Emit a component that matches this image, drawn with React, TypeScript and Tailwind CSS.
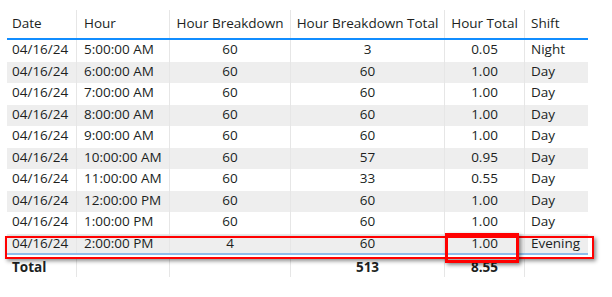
const COLS = 'grid grid-cols-[70px_93px_121px_154px_80px_63px]'

const ROWS = [
  ['5:00:00 AM', '60', '3', '0.05', 'Night'],
  ['6:00:00 AM', '60', '60', '1.00', 'Day'],
  ['7:00:00 AM', '60', '60', '1.00', 'Day'],
  ['8:00:00 AM', '60', '60', '1.00', 'Day'],
  ['9:00:00 AM', '60', '60', '1.00', 'Day'],
  ['10:00:00 AM', '60', '57', '0.95', 'Day'],
  ['11:00:00 AM', '60', '33', '0.55', 'Day'],
  ['12:00:00 PM', '60', '60', '1.00', 'Day'],
  ['1:00:00 PM', '60', '60', '1.00', 'Day'],
  ['2:00:00 PM', '4', '60', '1.00', 'Evening'],
]

const cell = 'border-r border-[#e6e6e6] whitespace-nowrap'

export default function App() {
  return (
    <div
      className="relative w-[612px] h-[297px] bg-white overflow-hidden pt-[10px] pl-[7px] text-[13.5px] text-[#201f1e]"
      style={{ fontFamily: '"Open Sans", "Noto Sans", sans-serif' }}
    >
      <div className="w-[581px]">
        {/* Header */}
        <div className={`${COLS} h-[30px] leading-[18px] border-b-2 border-[#118dff]`}>
          <div className={`${cell} pl-[5px] pt-[4px]`}>Date</div>
          <div className={`${cell} pl-[7px] pt-[4px]`}>Hour</div>
          <div className={`${cell} text-center pt-[4px]`}>Hour Breakdown</div>
          <div className={`${cell} text-center pt-[4px]`}>Hour Breakdown Total</div>
          <div className={`${cell} text-center pt-[4px]`}>Hour Total</div>
          <div className="pl-[6px] pt-[4px]">Shift</div>
        </div>

        {/* Body */}
        {ROWS.map((r, i) => {
          const last = i === ROWS.length - 1
          return (
            <div
              key={i}
              className={`${COLS} h-[21.5px] leading-[19px] ${i % 2 === 1 ? 'bg-[#eeeeee]' : 'bg-white'} ${last ? 'border-b-2 border-[#8fbdeb]' : ''}`}
            >
              <div className={`${cell} pl-[5px]`}>04/16/24</div>
              <div className={`${cell} pl-[7px]`}>{r[0]}</div>
              <div className={`${cell} text-center`}>{r[1]}</div>
              <div className={`${cell} text-center`}>{r[2]}</div>
              <div className={`${cell} text-center`}>{r[3]}</div>
              <div className="pl-[6px]">{r[4]}</div>
            </div>
          )
        })}

        {/* Total */}
        <div className={`${COLS} h-[22px] leading-[20px] pt-[2px] font-bold`}>
          <div className={`${cell} pl-[5px]`}>Total</div>
          <div className={cell}></div>
          <div className={cell}></div>
          <div className={`${cell} text-center`}>513</div>
          <div className={`${cell} text-center`}>8.55</div>
          <div></div>
        </div>
      </div>

      {/* Annotation boxes */}
      <div className="absolute left-[5px] top-[236px] w-[589px] h-[23px] border-2 border-[#ff0000] shadow-[2px_2px_4px_rgba(0,0,0,0.45)]" />
      <div className="absolute left-[445px] top-[233px] w-[74px] h-[30px] border-[3px] border-[#ff0000] shadow-[2px_2px_4px_rgba(0,0,0,0.45)]" />
    </div>
  )
}
